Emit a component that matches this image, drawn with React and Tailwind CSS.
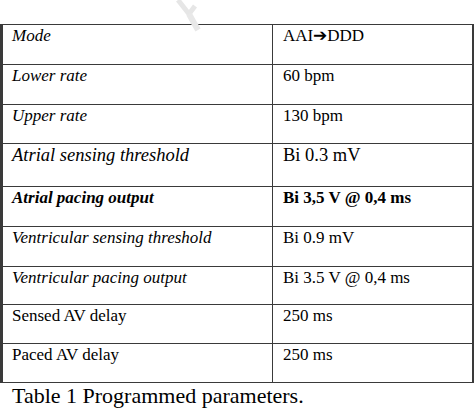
export default function App() {
  const rows = [
    { label: 'Mode', value: 'AAI\u2794DDD', h: 'h-[40px]', lc: 'italic text-[17px]', vc: 'text-[17px]' },
    { label: 'Lower rate', value: '60 bpm', h: 'h-[40px]', lc: 'italic text-[17px]', vc: 'text-[17px]' },
    { label: 'Upper rate', value: '130 bpm', h: 'h-[39px]', lc: 'italic text-[17px]', vc: 'text-[17px]' },
    { label: 'Atrial sensing threshold', value: 'Bi 0.3 mV', h: 'h-[43px]', lc: 'italic text-[18.5px]', vc: 'text-[18.5px]' },
    { label: 'Atrial pacing output', value: 'Bi 3,5 V @ 0,4 ms', h: 'h-[40px]', lc: 'italic font-bold text-[17px]', vc: 'font-bold text-[17px]' },
    { label: 'Ventricular sensing threshold', value: 'Bi 0.9 mV', h: 'h-[40px]', lc: 'italic text-[17px]', vc: 'text-[17px]' },
    { label: 'Ventricular pacing output', value: 'Bi 3.5 V @ 0,4 ms', h: 'h-[38px]', lc: 'italic text-[17px]', vc: 'text-[17px]' },
    { label: 'Sensed AV delay', value: '250 ms', h: 'h-[39px]', lc: 'text-[17px]', vc: 'text-[17px]' },
    { label: 'Paced AV delay', value: '250 ms', h: 'h-[39px]', lc: 'text-[17px]', vc: 'text-[17px]' },
  ];

  return (
    <div className="relative w-[474px] h-[409px] bg-white text-black overflow-hidden" style={{ fontFamily: '"Liberation Serif", "Times New Roman", serif' }}>
      {/* faint watermark fragment */}
      <svg className="absolute left-[168px] top-0" width="36" height="34" viewBox="0 0 36 34">
        <path d="M10 0 L21 14 L27 6" stroke="#e6e6e6" strokeWidth="5" fill="none" />
        <path d="M21 14 L30 30" stroke="#e8e8e8" strokeWidth="6" fill="none" />
      </svg>

      <div className="pt-[24px]">
        <div className="border-t border-l-[3px] border-r-[2px] border-[#3a3a3a]">
          {rows.map((r, i) => (
            <div key={i} className={`flex ${r.h} border-b-[1.5px] border-[#3a3a3a]`}>
              <div className={`w-[270px] border-r border-[#3a3a3a] pl-[9px] pt-[1px] leading-[20px] ${r.lc}`}>{r.label}</div>
              <div className={`flex-1 pl-[10px] pt-[1px] leading-[20px] ${r.vc}`}>{r.value}</div>
            </div>
          ))}
        </div>
        <div className="pl-[12px] pt-[1px] text-[22px] leading-[24px]">Table 1 Programmed parameters.</div>
      </div>
    </div>
  );
}
